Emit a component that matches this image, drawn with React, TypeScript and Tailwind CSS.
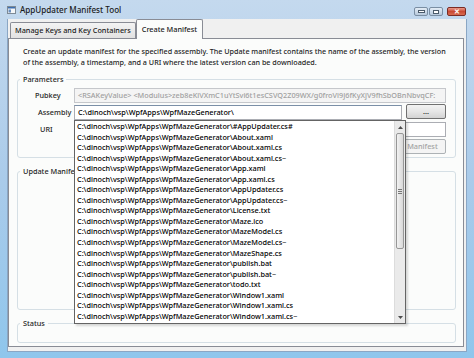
import React from 'react';

const basePath = 'C:\\dinoch\\vsp\\WpfApps\\WpfMazeGenerator\\';

const files = [
  '#AppUpdater.cs#',
  'About.xaml',
  'About.xaml.cs',
  'About.xaml.cs~',
  'App.xaml',
  'App.xaml.cs',
  'AppUpdater.cs',
  'AppUpdater.cs~',
  'License.txt',
  'Maze.ico',
  'MazeModel.cs',
  'MazeModel.cs~',
  'MazeShape.cs',
  'publish.bat',
  'publish.bat~',
  'todo.txt',
  'Window1.xaml',
  'Window1.xaml.cs',
  'Window1.xaml.cs~',
];

const GroupBox: React.FC<{ label: string; className?: string; children?: React.ReactNode }> = ({
  label,
  className = '',
  children,
}) => (
  <fieldset className={`min-w-0 border border-[#d5dfe5] rounded-[3px] ${className}`}>
    <legend className="ml-[2px] px-[3px] leading-[11px] text-[#1e1e1e]">{label}</legend>
    {children}
  </fieldset>
);

const Scrollbar = () => (
  <div className="w-[11px] flex flex-col bg-[#eaeaea] border-l border-[#dcdcdc]">
    <div className="h-[12px] flex items-center justify-center">
      <svg width="5" height="3" viewBox="0 0 5 3">
        <path d="M0 3 L2.5 0 L5 3 Z" fill="#4d4d4d" />
      </svg>
    </div>
    <div className="mx-[1px] h-[116px] rounded-[2px] border border-[#979797] bg-gradient-to-r from-[#f2f2f2] to-[#d8d8d8] flex items-center justify-center">
      <div className="flex flex-col gap-[1px]">
        <div className="w-[4px] h-px bg-[#777]" />
        <div className="w-[4px] h-px bg-[#777]" />
        <div className="w-[4px] h-px bg-[#777]" />
      </div>
    </div>
    <div className="flex-1" />
    <div className="h-[12px] flex items-center justify-center">
      <svg width="5" height="3" viewBox="0 0 5 3">
        <path d="M0 0 L2.5 3 L5 0 Z" fill="#4d4d4d" />
      </svg>
    </div>
  </div>
);

export default function App() {
  return (
    <div className="w-[474px] h-[358px] overflow-hidden flex flex-col bg-gradient-to-b from-[#c4d9ee] via-[#aacbea] to-[#8fc6ec] font-['Noto_Sans',sans-serif] font-medium text-[7.3px] text-black">
      {/* title bar */}
      <div className="h-[18px] flex items-center pl-[7px] pr-[8px] pt-[2px]">
        <svg width="9" height="8" viewBox="0 0 9 8" className="mr-[4px]">
          <rect x="0.5" y="0.5" width="8" height="7" fill="#f4f6f8" stroke="#7d8a96" />
          <rect x="1" y="1" width="7" height="1.5" fill="#3c6fb0" />
          <rect x="1.5" y="3.5" width="2.5" height="3" fill="#6a8fc0" />
        </svg>
        <span className="text-[8.1px] text-[#1a1a1a]">AppUpdater Manifest Tool</span>
        <div className="flex-1" />
        <div className="flex items-center gap-[1px] self-start mt-[5px]">
          <div className="w-[14px] h-[9px] rounded-[2px] border border-[#7a8ea3] bg-gradient-to-b from-[#e3ecf5] to-[#b7c9dc] flex items-end justify-center pb-[2px]">
            <div className="w-[5px] h-px bg-white border border-[#4a5a6a] box-content" />
          </div>
          <div className="w-[14px] h-[9px] rounded-[2px] border border-[#7a8ea3] bg-gradient-to-b from-[#e3ecf5] to-[#b7c9dc] flex items-center justify-center">
            <div className="w-[6px] h-[4px] border border-[#4a5a6a] bg-white" />
          </div>
          <div className="ml-[3px] w-[19px] h-[9px] rounded-[2px] border border-[#7b2c24] bg-gradient-to-b from-[#e99a8c] via-[#c94a34] to-[#d86b50] flex items-center justify-center">
            <span className="text-white text-[7px] leading-none font-bold">✕</span>
          </div>
        </div>
      </div>

      {/* client area */}
      <div className="mx-[7px] mb-[6px] mt-px flex-1 bg-[#f0f0f0] flex flex-col border border-[#8aa6c4] border-t-0">
        {/* tabs */}
        <div className="h-[19px] flex items-end pl-[2px]">
          <div className="h-[16px] px-[4px] flex items-center border border-b-0 border-[#898c95] rounded-t-[2px] bg-gradient-to-b from-[#f3f3f3] to-[#e2e2e2] text-[#1a1a1a]">
            Manage Keys and Key Containers
          </div>
          <div className="relative z-10 -mb-px h-[20px] px-[5px] flex items-center border border-b-0 border-[#898c95] rounded-t-[2px] bg-[#fbfcfb] text-[#1a1a1a]">
            Create Manifest
          </div>
        </div>

        {/* tab panel */}
        <div className="flex-1 min-w-0 mr-[2px] mb-[4px] border border-[#898c95] bg-[#fbfcfb] flex flex-col pl-[8px] pr-[7px] pt-[7px] pb-[3px]">
          <p className="pl-[6px] leading-[11px] text-[7.2px] text-[#1e1e1e] whitespace-nowrap">
            Create an update manifest for the specified assembly. The Update manifest contains the name of the assembly, the version
            <br />
            of the assembly, a timestamp, and a URI where the latest version can be downloaded.
          </p>

          <GroupBox label="Parameters" className="mt-[6px] pb-[3px]">
            <div className="flex flex-col gap-[2px] pr-[9px] mt-[3px]">
              <div className="flex items-center h-[15px]">
                <span className="w-[56px] shrink-0 pl-[17px] text-[#1e1e1e]">Pubkey</span>
                <div className="flex-1 min-w-0 h-full border border-[#c5c7cb] bg-[#f4f4f4] pl-[3px] flex items-center overflow-hidden whitespace-nowrap text-[#a0a0a0]">
                  &lt;RSAKeyValue&gt; &lt;Modulus&gt;zeb8eKiVXmC1uYtSvi6t1esCSVQ2Z09WX/g0froVi9J6fKyXjV9fhSbOBnNbvqCF:
                </div>
              </div>
              <div className="flex items-center h-[15px]">
                <span className="w-[56px] shrink-0 pl-[20px] text-[#1e1e1e]">Assembly</span>
                <div className="relative flex-1 min-w-0 h-full flex gap-[4px]">
                  <div className="flex-1 min-w-0 h-full border border-[#abadb3] border-t-[#7b8fa7] bg-white pl-[3px] flex items-center whitespace-nowrap overflow-hidden">
                    {basePath}
                  </div>
                  <button className="w-[40px] shrink-0 h-[15px] -mt-px rounded-[2px] border border-[#707070] bg-gradient-to-b from-[#f3f3f3] via-[#e6e6e6] to-[#d3d3d3] flex items-center justify-center leading-none text-[#1e1e1e]">
                    ...
                  </button>

                  {/* autocomplete popup */}
                  <div className="absolute left-0 top-[15px] z-20 w-[332px] h-[204px] bg-white border border-[#646464] flex shadow-[2px_2px_2px_rgba(0,0,0,0.15)]">
                    <div className="flex-1 min-w-0 flex flex-col overflow-hidden">
                      {files.map((f) => (
                        <div key={f} className="h-[10.55px] leading-[10.55px] pl-[2px] whitespace-nowrap">
                          {basePath + f}
                        </div>
                      ))}
                    </div>
                    <Scrollbar />
                  </div>
                </div>
              </div>
              <div className="flex items-center h-[15px]">
                <span className="w-[56px] shrink-0 pl-[22px] text-[#1e1e1e]">URI</span>
                <div className="flex-1 h-full border border-[#abadb3] bg-white" />
              </div>
              <div className="flex justify-end h-[15px]">
                <button className="w-[72px] h-[15px] rounded-[2px] border border-[#adb2b5] bg-[#f4f4f4] text-[#a3a3a3] leading-none">
                  Create Manifest
                </button>
              </div>
            </div>
          </GroupBox>

          <GroupBox label="Update Manifest" className="mt-[8px] flex-1" />

          <GroupBox label="Status" className="mt-[8px] h-[25px]" />
        </div>
      </div>
    </div>
  );
}
